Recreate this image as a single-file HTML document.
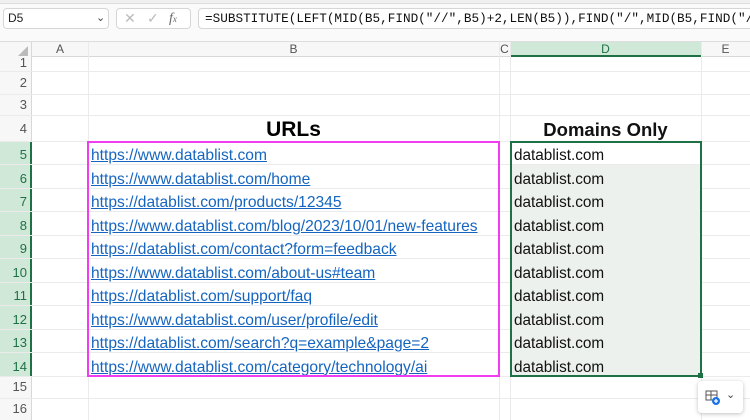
<!DOCTYPE html>
<html><head><meta charset="utf-8"><style>
*{margin:0;padding:0;box-sizing:border-box}
body{width:750px;height:420px;overflow:hidden;background:#fff;font-family:"Liberation Sans",sans-serif;position:relative}
.a{position:absolute}
.hl{position:absolute;height:1px;background:#ebebeb;left:0;width:750px}
.vl{position:absolute;width:1px;background:#ebebeb;top:42px;height:378px}
.rn{position:absolute;left:0;width:32px;text-align:right;padding-right:5px;font-size:13px;color:#555}
.u{position:absolute;left:91px;font-size:15.6px;color:#1565c0;text-decoration:underline;white-space:nowrap;letter-spacing:0px}
.d{position:absolute;left:514px;font-size:15.3px;color:#111;white-space:nowrap}
.dbg{position:absolute;left:511px;width:189px;height:23.5px;background:#edf1ed}
</style></head><body>
<div class="a" style="left:0;top:0;width:750px;height:4px;background:#f0f0f0;border-bottom:1px solid #ddd"></div>
<div class="a" style="left:0;top:4px;width:750px;height:38px;background:#fafafa;border-bottom:1px solid #ddd"></div>
<div class="a" style="left:3px;top:8px;width:106px;height:21px;border:1px solid #d6d6d6;border-radius:4px;background:#fff;font-size:12px;line-height:19px;padding-left:4px;color:#222">D5<span class="a" style="left:92px;top:0;font-size:11px;color:#444">&#8964;</span></div>
<div class="a" style="left:116px;top:8px;width:75px;height:21px;border:1px solid #d6d6d6;border-radius:4px;background:#fff;color:#bbb;font-size:14px;line-height:19px">
<span class="a" style="left:7px">&#10005;</span><span class="a" style="left:30px">&#10003;</span><span class="a" style="left:52px;color:#666;font-style:italic;font-family:'Liberation Serif',serif">f<span style="font-size:9px">x</span></span></div>
<div class="a" style="left:198px;top:8px;width:560px;height:21px;border:1px solid #d6d6d6;border-radius:4px;background:#fff;font-family:'Liberation Mono',monospace;font-size:12.7px;line-height:19px;padding-left:6px;color:#111;white-space:nowrap;overflow:hidden">=SUBSTITUTE(LEFT(MID(B5,FIND("//",B5)+2,LEN(B5)),FIND("/",MID(B5,FIND("//",B5)+2,</div>
<div class="a" style="left:0;top:42px;width:750px;height:15px;background:#f7f7f7;border-bottom:1px solid #d8d8d8"></div>
<div class="a" style="left:0;top:42px;width:32px;height:378px;background:#f7f7f7;border-right:1px solid #d8d8d8"></div>
<div class="a" style="left:18px;top:46px;width:0;height:0;border-left:10px solid transparent;border-bottom:10px solid #bbb"></div>
<div class="a" style="left:510px;top:42px;width:191px;height:15px;background:#cfe8d8;border-bottom:2px solid #1e7145"></div>
<div class="a" style="left:32px;top:42px;width:56px;text-align:center;font-size:12px;color:#555;line-height:15px">A</div>
<div class="a" style="left:88px;top:42px;width:411px;text-align:center;font-size:12px;color:#555;line-height:15px">B</div>
<div class="a" style="left:499px;top:42px;width:11px;text-align:center;font-size:12px;color:#555;line-height:15px">C</div>
<div class="a" style="left:510px;top:42px;width:191px;text-align:center;font-size:12px;color:#1e7145;line-height:15px">D</div>
<div class="a" style="left:701px;top:42px;width:49px;text-align:center;font-size:12px;color:#555;line-height:15px">E</div>
<div class="a" style="left:0;top:141px;width:32px;height:235px;background:#cfe8d8;border-right:2px solid #1e7145"></div>
<div class="vl" style="left:88px"></div><div class="vl" style="left:499px"></div><div class="vl" style="left:510px"></div><div class="vl" style="left:701px"></div>
<div class="hl" style="top:71px"></div><div class="hl" style="top:94px"></div><div class="hl" style="top:115px"></div><div class="hl" style="top:141px"></div>
<div class="hl" style="top:164px"></div><div class="hl" style="top:188px"></div><div class="hl" style="top:211px"></div><div class="hl" style="top:235px"></div><div class="hl" style="top:258px"></div><div class="hl" style="top:282px"></div><div class="hl" style="top:305px"></div><div class="hl" style="top:329px"></div><div class="hl" style="top:352px"></div><div class="hl" style="top:376px"></div><div class="hl" style="top:398px"></div>
<div class="dbg" style="top:164.5px;height:211px"></div>
<div class="rn" style="top:57px;line-height:12px">1</div>
<div class="rn" style="top:71px;line-height:23px">2</div>
<div class="rn" style="top:94px;line-height:21px">3</div>
<div class="rn" style="top:115px;line-height:28px">4</div>
<div class="rn" style="top:142px;line-height:25px;color:#1e7145">5</div>
<div class="rn" style="top:165.5px;line-height:25px;color:#1e7145">6</div>
<div class="rn" style="top:189px;line-height:25px;color:#1e7145">7</div>
<div class="rn" style="top:212.5px;line-height:25px;color:#1e7145">8</div>
<div class="rn" style="top:236px;line-height:25px;color:#1e7145">9</div>
<div class="rn" style="top:259.5px;line-height:25px;color:#1e7145">10</div>
<div class="rn" style="top:283px;line-height:25px;color:#1e7145">11</div>
<div class="rn" style="top:306.5px;line-height:25px;color:#1e7145">12</div>
<div class="rn" style="top:330px;line-height:25px;color:#1e7145">13</div>
<div class="rn" style="top:353.5px;line-height:25px;color:#1e7145">14</div>
<div class="rn" style="top:376px;line-height:22px">15</div>
<div class="rn" style="top:398px;line-height:22px">16</div>
<div class="a" style="left:88px;top:116px;width:411px;text-align:center;font-size:21px;font-weight:bold;line-height:28px;color:#000">URLs</div>
<div class="a" style="left:510px;top:116px;width:191px;text-align:center;font-size:18.5px;font-weight:bold;line-height:28px;color:#111">Domains Only</div>
<div class="u" style="top:143px;line-height:25px">https://www.datablist.com</div>
<div class="u" style="top:166.5px;line-height:25px">https://www.datablist.com/home</div>
<div class="u" style="top:190px;line-height:25px">https://datablist.com/products/12345</div>
<div class="u" style="top:213.5px;line-height:25px">https://www.datablist.com/blog/2023/10/01/new-features</div>
<div class="u" style="top:237px;line-height:25px">https://datablist.com/contact?form=feedback</div>
<div class="u" style="top:260.5px;line-height:25px">https://www.datablist.com/about-us#team</div>
<div class="u" style="top:284px;line-height:25px">https://datablist.com/support/faq</div>
<div class="u" style="top:307.5px;line-height:25px">https://www.datablist.com/user/profile/edit</div>
<div class="u" style="top:331px;line-height:25px">https://datablist.com/search?q=example&amp;page=2</div>
<div class="u" style="top:354.5px;line-height:25px">https://www.datablist.com/category/technology/ai</div>
<div class="d" style="top:143px;line-height:25px">datablist.com</div>
<div class="d" style="top:166.5px;line-height:25px">datablist.com</div>
<div class="d" style="top:190px;line-height:25px">datablist.com</div>
<div class="d" style="top:213.5px;line-height:25px">datablist.com</div>
<div class="d" style="top:237px;line-height:25px">datablist.com</div>
<div class="d" style="top:260.5px;line-height:25px">datablist.com</div>
<div class="d" style="top:284px;line-height:25px">datablist.com</div>
<div class="d" style="top:307.5px;line-height:25px">datablist.com</div>
<div class="d" style="top:331px;line-height:25px">datablist.com</div>
<div class="d" style="top:354.5px;line-height:25px">datablist.com</div>
<div class="a" style="left:87px;top:141px;width:413px;height:236px;border:2px solid #f23cf2"></div>
<div class="a" style="left:510px;top:141px;width:192px;height:236px;border:2px solid #1e7145"></div>
<div class="a" style="left:698px;top:373px;width:5px;height:5px;background:#1e7145"></div>
<div class="a" style="left:698px;top:381px;width:45px;height:32px;background:#fff;border-radius:4px;box-shadow:0 1px 4px rgba(0,0,0,.25)">
<svg class="a" style="left:7px;top:9px" width="16" height="16" viewBox="0 0 16 16"><rect x="1" y="1" width="11" height="9" fill="none" stroke="#555" stroke-width="1"/><line x1="1" y1="5" x2="12" y2="5" stroke="#555"/><line x1="6" y1="1" x2="6" y2="10" stroke="#555"/><circle cx="11" cy="11" r="4" fill="#1a73e8"/><path d="M11 9v4M9 11h4" stroke="#fff" stroke-width="1.3"/></svg>
<div class="a" style="left:28px;top:7px;font-size:11px;color:#444">&#8964;</div>
</div>
</body></html>
